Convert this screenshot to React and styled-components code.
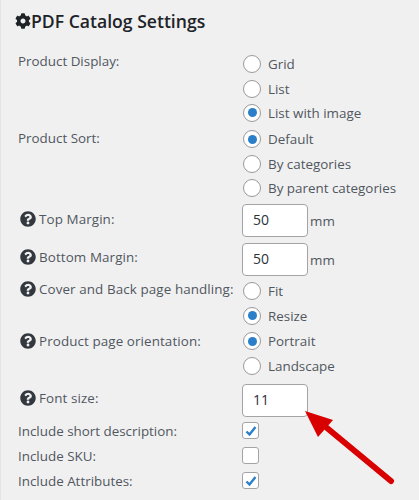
import React from 'react';
import styled, { createGlobalStyle } from 'styled-components';
import { FaCog, FaQuestionCircle } from 'react-icons/fa';

const Global = createGlobalStyle`
  html, body { margin: 0; padding: 0; background: #f0f0f1; }
  body { font-family: "Open Sans", "Noto Sans", sans-serif; color: #50575e; }
`;
const Page = styled.div`
  position: relative; width: 419px; height: 500px; overflow: hidden; box-sizing: border-box;
  background: #f0f0f1; border-left: 1px solid #e4e4e5; padding: 9px 0 0 14px;
`;
const Heading = styled.h2`
  display: flex; align-items: center; margin: 0 0 19px; font-size: 17.6px; line-height: 24px; font-weight: 600; color: #1d2327;
  svg { width: 16px; height: 16px; flex: none; }
`;
const Form = styled.div`
  display: grid; grid-template-columns: 224px 1fr; padding-left: 3px;
`;
const Label = styled.div`
  display: flex; align-items: flex-start; gap: 3px; font-size: 13.4px; line-height: 20px; color: #50575e;
  height: ${p => p.$h}px; padding-top: ${p => p.$pt ?? 0}px; box-sizing: border-box; margin-left: ${p => p.$help ? 2 : 0}px; white-space: nowrap;
  letter-spacing: ${p => p.$help ? 0.1 : 0}px; margin-top: ${p => p.$mt ?? 0}px;
  svg { width: 16px; height: 16px; margin-top: 2px; color: #33383f; flex: none; }
`;
const Control = styled.div`
  height: ${p => p.$h}px; display: flex; flex-direction: column; box-sizing: border-box;
`;
const RadioRow = styled.div`
  display: flex; align-items: center; gap: 7px; height: 24.4px; font-size: 13.4px; color: #50575e; margin-left: 1px;
`;
const RadioCircle = styled.span`
  width: 18px; height: 18px; box-sizing: border-box; border: 1.5px solid #9a9a9c; border-radius: 50%; background: #fff; flex: none; display: flex; align-items: center; justify-content: center;
  &::after { content: ""; display: ${p => p.$on ? 'block' : 'none'}; width: 9px; height: 9px; border-radius: 50%; background: #2b7fc9; }
`;
const InputRow = styled.div`
  display: flex; align-items: center; gap: 2px; font-size: 13.4px; color: #50575e;
`;
const Input = styled.div`
  width: 66px; height: 33px; border: 1.5px solid #a4a4a6; border-radius: 4px; background: #fff; box-sizing: border-box;
  padding-left: 10px; font-size: 14px; line-height: 30px; color: #2c3338;
`;
const Check = styled.span`
  width: 17px; height: 17px; box-sizing: border-box; margin-top: 5px; border: 1.5px solid #a4a4a6; border-radius: 3px; background: #fff; display: flex; align-items: center; justify-content: center;
  svg { width: 14px; height: 14px; }
`;
const Arrow = styled.svg`
  position: absolute; left: 0; top: 0; width: 419px; height: 500px; pointer-events: none;
`;

const Radio = ({ on, children }) => <RadioRow><RadioCircle $on={on} />{children}</RadioRow>;
const Tick = () => (
  <svg viewBox="0 0 14 14"><path d="M2.5 7.5 L5.5 10.5 L11.5 3" fill="none" stroke="#2b7fc9" strokeWidth="2.4" /></svg>
);

export default function App() {
  return (
    <Page>
      <Global />
      <Heading><FaCog />PDF Catalog Settings</Heading>
      <Form>
        <Label $h={75} $mt={-1}>Product Display:</Label>
        <Control $h={75}>
          <Radio>Grid</Radio><Radio>List</Radio><Radio on>List with image</Radio>
        </Control>
        <Label $h={77} $pt={1}>Product Sort:</Label>
        <Control $h={77}>
          <Radio on>Default</Radio><Radio>By categories</Radio><Radio>By parent categories</Radio>
        </Control>
        <Label $h={39} $pt={5} $help><FaQuestionCircle />Top Margin:</Label>
        <Control $h={39}><InputRow><Input>50</Input>mm</InputRow></Control>
        <Label $h={36} $pt={4} $help><FaQuestionCircle />Bottom Margin:</Label>
        <Control $h={36}><InputRow><Input>50</Input>mm</InputRow></Control>
        <Label $h={50} $help><FaQuestionCircle />Cover and Back page handling:</Label>
        <Control $h={50}><Radio>Fit</Radio><Radio on>Resize</Radio></Control>
        <Label $h={55} $pt={2} $help><FaQuestionCircle />Product page orientation:</Label>
        <Control $h={55}><Radio on>Portrait</Radio><Radio>Landscape</Radio></Control>
        <Label $h={33} $pt={4} $help><FaQuestionCircle />Font size:</Label>
        <Control $h={33}><Input>11</Input></Control>
        <Label $h={25} $pt={4}>Include short description:</Label>
        <Control $h={25}><Check><Tick /></Check></Control>
        <Label $h={25} $pt={4}>Include SKU:</Label>
        <Control $h={25}><Check /></Control>
        <Label $h={25} $pt={4}>Include Attributes:</Label>
        <Control $h={25}><Check><Tick /></Check></Control>
      </Form>
      <Arrow viewBox="0 0 419 500">
        <path d="M390 481 L326 428" stroke="#d90000" strokeWidth="6" strokeLinecap="round" fill="none" />
        <polygon points="304,411 332,420 317,437" fill="#d90000" />
      </Arrow>
    </Page>
  );
}
